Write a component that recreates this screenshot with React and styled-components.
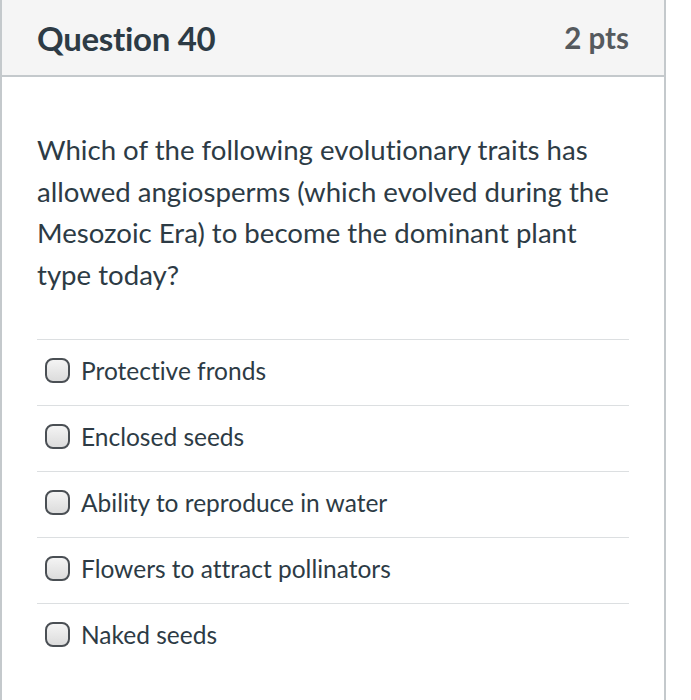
import React from 'react'
import styled, { createGlobalStyle } from 'styled-components'

const GlobalStyle = createGlobalStyle`
  html, body {
    margin: 0;
    padding: 0;
    background: #ffffff;
  }
  body {
    font-family: Lato, "Open Sans", sans-serif;
    font-variant-ligatures: none;
  }
`

const answers = [
  'Protective fronds',
  'Enclosed seeds',
  'Ability to reproduce in water',
  'Flowers to attract pollinators',
  'Naked seeds',
]

const App = () => {
  return (
    <>
      <GlobalStyle />
      <Panel>
        <Header>
          <Title>Question 40</Title>
          <Points>2 pts</Points>
        </Header>
        <Body>
          <QuestionText>
            Which of the following evolutionary traits has allowed angiosperms (which evolved during the
            Mesozoic Era) to become the dominant plant type today?
          </QuestionText>
          <Answers>
            {answers.map((a) => (
              <Answer key={a}>
                <Radio />
                <AnswerLabel>{a}</AnswerLabel>
              </Answer>
            ))}
          </Answers>
        </Body>
      </Panel>
    </>
  )
}

const Panel = styled.div`
  width: 662px;
  height: 700px;
  border-left: 2px solid #c4c9cc;
  border-right: 2px solid #c4c9cc;
  background: #ffffff;
  box-sizing: content-box;
`

const Header = styled.div`
  height: 75px;
  background: #f5f5f5;
  border-bottom: 2px solid #c4c9cc;
  display: flex;
  align-items: center;
  justify-content: space-between;
  padding: 0 35px;
`

const Title = styled.div`
  font-weight: 700;
  font-size: 33px;
  color: #2d3b45;
  letter-spacing: -0.3px;
`

const Points = styled.div`
  font-weight: 700;
  font-size: 29.5px;
  color: #555a5e;
`

const Body = styled.div`
  padding: 52px 35px 0;
`

const QuestionText = styled.p`
  margin: 0 0 44px;
  font-size: 27.6px;
  line-height: 41.5px;
  color: #2d3b45;
`

const Answers = styled.div`
  display: flex;
  flex-direction: column;
`

const Answer = styled.div`
  height: 60px;
  padding: 0 0 5px 8px;
  border-top: 1px solid #dcdfe1;
  display: flex;
  align-items: center;
  gap: 11px;
`

const Radio = styled.span`
  width: 21px;
  height: 21px;
  border: 2px solid #4a4f54;
  border-radius: 8px;
  background: linear-gradient(#f4f4f4, #dcdcdc);
  flex-shrink: 0;
`

const AnswerLabel = styled.span`
  font-size: 24.5px;
  color: #2d3b45;
`

export default App
